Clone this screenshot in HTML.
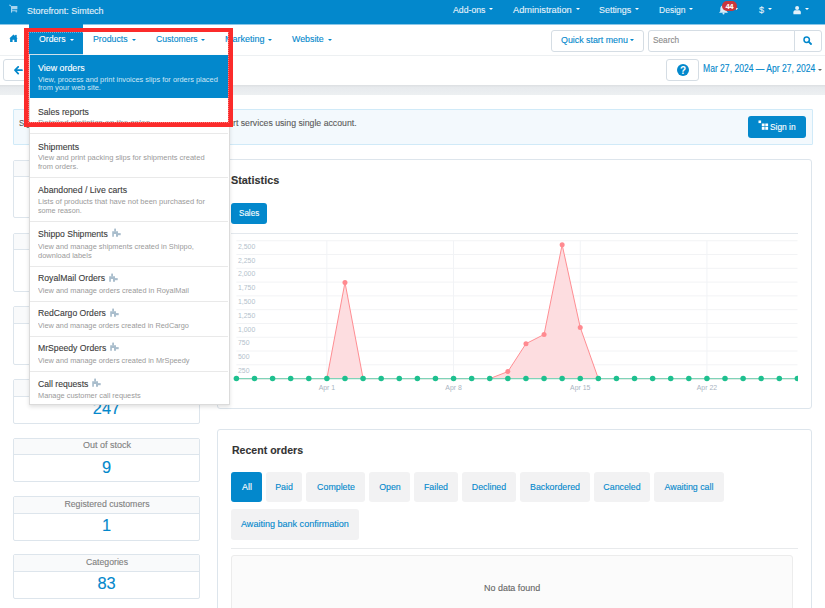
<!DOCTYPE html>
<html><head><meta charset="utf-8"><style>
html,body{margin:0;padding:0;}
body{width:825px;height:608px;overflow:hidden;position:relative;background:#fff;font-family:"Liberation Sans", sans-serif;}
body>div{position:absolute;box-sizing:content-box;}
.t{white-space:nowrap;-webkit-text-stroke:0.12px currentColor;}
.d{-webkit-text-stroke:0;}
</style></head><body>
<div style="left:0px;top:0px;width:825px;height:24px;background:#0388cc;"></div>
<div style="left:0px;top:24px;width:825px;height:1px;background:#8ac7e8;"></div>
<svg style="position:absolute;left:8px;top:4px" width="10" height="10" viewBox="0 0 10 10"><path d="M0.9 0.7H2.4L3.2 2.1H9.4V5.2H4.1V6.2H9.2V7.3H3V2.5L1.5 1.8Z" fill="#a6d4ee"/><rect x="3" y="2.1" width="1.1" height="6.5" fill="#a6d4ee"/><circle cx="8.3" cy="7.6" r="0.9" fill="#8cc6e8"/></svg>
<div class="t" style="left:27.4px;top:5.87px;font-size:9.6px;line-height:9.6px;color:#e3f1fa;font-weight:400;transform:scaleX(0.9322);transform-origin:0 50%;">Storefront: Simtech</div>
<div class="t" style="left:453px;top:5.17px;font-size:9.6px;line-height:9.6px;color:#e3f1fa;font-weight:400;transform:scaleX(0.9089);transform-origin:0 50%;">Add-ons</div>
<svg style="position:absolute;left:489px;top:7.5px" width="4" height="2" viewBox="0 0 4 2"><polygon points="0,0 4,0 2.0,2" fill="#fff"/></svg>
<div class="t" style="left:513px;top:5.17px;font-size:9.6px;line-height:9.6px;color:#e3f1fa;font-weight:400;transform:scaleX(0.9659);transform-origin:0 50%;">Administration</div>
<svg style="position:absolute;left:575.5px;top:7.5px" width="4" height="2" viewBox="0 0 4 2"><polygon points="0,0 4,0 2.0,2" fill="#fff"/></svg>
<div class="t" style="left:599px;top:5.17px;font-size:9.6px;line-height:9.6px;color:#e3f1fa;font-weight:400;transform:scaleX(0.9297);transform-origin:0 50%;">Settings</div>
<svg style="position:absolute;left:635px;top:7.5px" width="4" height="2" viewBox="0 0 4 2"><polygon points="0,0 4,0 2.0,2" fill="#fff"/></svg>
<div class="t" style="left:658.75px;top:5.17px;font-size:9.6px;line-height:9.6px;color:#e3f1fa;font-weight:400;transform:scaleX(0.8868);transform-origin:0 50%;">Design</div>
<svg style="position:absolute;left:689px;top:7.5px" width="4" height="2" viewBox="0 0 4 2"><polygon points="0,0 4,0 2.0,2" fill="#fff"/></svg>
<svg style="position:absolute;left:718px;top:4px" width="11" height="11" viewBox="0 0 11 11"><path d="M5.5 1.2c-2 0-3.2 1.6-3.2 3.6v2.4L1 8.8h9L8.7 7.2V4.8c0-2-1.2-3.6-3.2-3.6z" fill="#d7ecf8"/><circle cx="5.5" cy="9.6" r="1" fill="#d7ecf8"/></svg>
<svg style="position:absolute;left:735px;top:7.5px" width="3" height="2" viewBox="0 0 3 2"><polygon points="0,0 3,0 1.5,2" fill="#fff"/></svg>
<div style="left:722px;top:1px;width:15px;height:9.5px;border-radius:5px;background:#c9373b;"></div>
<div class="t" style="left:429.6px;width:600px;text-align:center;top:3.37px;font-size:7px;line-height:7px;color:#fff;font-weight:700;">44</div>
<div class="t" style="left:759px;top:5.78px;font-size:9px;line-height:9px;color:#e3f1fa;font-weight:400;">$</div>
<svg style="position:absolute;left:767.5px;top:7.8px" width="4" height="2" viewBox="0 0 4 2"><polygon points="0,0 4,0 2.0,2" fill="#fff"/></svg>
<svg style="position:absolute;left:793px;top:4.6px" width="9" height="10" viewBox="0 0 9 10"><circle cx="4.1" cy="3" r="2" fill="#e3f1fa"/><path d="M0.4 9.2V7.2C0.4 5.8 1.4 5.2 2.6 5.2H5.6C6.8 5.2 7.8 5.8 7.8 7.2V9.2Z" fill="#e3f1fa"/></svg>
<svg style="position:absolute;left:805px;top:7.8px" width="4" height="2" viewBox="0 0 4 2"><polygon points="0,0 4,0 2.0,2" fill="#fff"/></svg>
<div style="left:0px;top:55px;width:825px;height:1px;background:#edf0f2;"></div>
<svg style="position:absolute;left:9px;top:34px" width="10" height="9" viewBox="0 0 10 9"><path d="M0.3 4.6L4.5 0.4L8.7 4.6H7.9V7.9H5.3V5.7H3.6V7.9H1.1V4.6Z" fill="#0388cc"/><rect x="6.1" y="0.9" width="1.6" height="2.8" fill="#0388cc"/></svg>
<div style="left:29px;top:24px;width:54px;height:30px;background:#0388cc;"></div>
<div style="left:29px;top:54px;width:54px;height:1px;background:#d2e4ee;"></div>
<div class="t" style="left:38.7px;top:33.84px;font-size:9.4px;line-height:9.4px;color:#fff;font-weight:400;transform:scaleX(0.9294);transform-origin:0 50%;">Orders</div>
<svg style="position:absolute;left:70px;top:38.5px" width="4" height="2" viewBox="0 0 4 2"><polygon points="0,0 4,0 2.0,2" fill="#fff"/></svg>
<div class="t" style="left:93.1px;top:33.84px;font-size:9.4px;line-height:9.4px;color:#0388cc;font-weight:400;transform:scaleX(0.9354);transform-origin:0 50%;">Products</div>
<svg style="position:absolute;left:132px;top:38.5px" width="4" height="2" viewBox="0 0 4 2"><polygon points="0,0 4,0 2.0,2" fill="#0388cc"/></svg>
<div class="t" style="left:155.5px;top:33.84px;font-size:9.4px;line-height:9.4px;color:#0388cc;font-weight:400;transform:scaleX(0.9176);transform-origin:0 50%;">Customers</div>
<svg style="position:absolute;left:201.3px;top:38.5px" width="4" height="2" viewBox="0 0 4 2"><polygon points="0,0 4,0 2.0,2" fill="#0388cc"/></svg>
<div class="t" style="left:225px;top:33.84px;font-size:9.4px;line-height:9.4px;color:#0388cc;font-weight:400;transform:scaleX(0.9631);transform-origin:0 50%;">Marketing</div>
<svg style="position:absolute;left:268px;top:38.5px" width="4" height="2" viewBox="0 0 4 2"><polygon points="0,0 4,0 2.0,2" fill="#0388cc"/></svg>
<div class="t" style="left:292.2px;top:33.84px;font-size:9.4px;line-height:9.4px;color:#0388cc;font-weight:400;transform:scaleX(0.9412);transform-origin:0 50%;">Website</div>
<svg style="position:absolute;left:328px;top:38.5px" width="4" height="2" viewBox="0 0 4 2"><polygon points="0,0 4,0 2.0,2" fill="#0388cc"/></svg>
<div style="left:551px;top:30px;width:91px;height:20px;border:1px solid #d5dde4;border-radius:3px;background:#fff;"></div>
<div class="t" style="left:561.25px;top:35.04px;font-size:9.4px;line-height:9.4px;color:#0388cc;font-weight:400;transform:scaleX(0.9430);transform-origin:0 50%;">Quick start menu</div>
<svg style="position:absolute;left:630px;top:39.2px" width="4" height="2.2" viewBox="0 0 4 2.2"><polygon points="0,0 4,0 2.0,2.2" fill="#0388cc"/></svg>
<div style="left:648px;top:30px;width:145px;height:20px;border:1px solid #d5dde4;border-radius:3px 0 0 3px;background:#fff;"></div>
<div class="t" style="left:652.75px;top:34.64px;font-size:9.4px;line-height:9.4px;color:#8c8c8c;font-weight:400;transform:scaleX(0.8813);transform-origin:0 50%;">Search</div>
<div style="left:794px;top:30px;width:26px;height:20px;border:1px solid #d5dde4;border-radius:0 3px 3px 0;background:#fff;"></div>
<svg style="position:absolute;left:803px;top:36px" width="9" height="9" viewBox="0 0 9 9"><circle cx="3.7" cy="3.7" r="2.7" fill="none" stroke="#0388cc" stroke-width="1.5"/><path d="M5.6 5.6L8 8" stroke="#0388cc" stroke-width="1.8" stroke-linecap="round"/></svg>
<div style="left:3px;top:59px;width:34px;height:20px;border:1px solid #d5dde4;border-radius:3px;background:#fff;"></div>
<svg style="position:absolute;left:14px;top:65.5px" width="9" height="9" viewBox="0 0 9 9"><path d="M4.2 0.8L1 4.2l3.2 3.4M1.4 4.2H8" fill="none" stroke="#0388cc" stroke-width="1.7" stroke-linecap="round" stroke-linejoin="round"/></svg>
<div style="left:666px;top:59px;width:31px;height:20px;border:1px solid #d5dde4;border-radius:3px;background:#fff;"></div>
<svg style="position:absolute;left:677px;top:63.6px" width="12" height="12" viewBox="0 0 12 12"><circle cx="6" cy="6" r="6" fill="#0388cc"/><text x="6" y="9.6" text-anchor="middle" font-family="Liberation Sans" font-weight="700" font-size="10" fill="#fff">?</text></svg>
<div class="t" style="left:703px;top:63.73px;font-size:10px;line-height:10px;color:#0388cc;font-weight:400;transform:scaleX(0.8556);transform-origin:0 50%;">Mar 27, 2024 — Apr 27, 2024</div>
<svg style="position:absolute;left:818px;top:69px" width="4" height="2" viewBox="0 0 4 2"><polygon points="0,0 4,0 2.0,2" fill="#666"/></svg>
<div style="left:0px;top:85px;width:825px;height:10px;background:linear-gradient(#dcdfe2,#e7eaed 25%,#eaedf0 60%,#edf0f2);"></div>
<div style="left:13px;top:109px;width:798px;height:33.5px;border:1px solid #d0eaf8;background:#f3f9fd;border-radius:1px;"></div>
<div class="t" style="left:19.4px;top:117.70px;font-size:9.8px;line-height:9.8px;color:#5c5c5c;font-weight:400;transform:scaleX(0.8091);transform-origin:0 50%;">Sign in to your account to connect the marketplace and Sma</div>
<div class="t" style="left:232.6px;top:117.87px;font-size:9.6px;line-height:9.6px;color:#5c5c5c;font-weight:400;transform:scaleX(0.9091);transform-origin:0 50%;">rt services using single account.</div>
<div style="left:748px;top:116px;width:58px;height:21.5px;border-radius:3px;background:#0388cc;"></div>
<svg style="position:absolute;left:757.5px;top:120px" width="11" height="11" viewBox="0 0 11 11"><rect x="0.5" y="0.5" width="2.6" height="2.6" fill="#fff"/><rect x="3.8" y="3.5" width="2.8" height="2.8" fill="#fff"/><rect x="7.3" y="3.5" width="2.8" height="2.8" fill="#fff"/><rect x="3.8" y="7" width="2.8" height="2.8" fill="#fff"/><rect x="7.3" y="7" width="2.8" height="2.8" fill="#fff"/></svg>
<div class="t" style="left:770px;top:122.07px;font-size:9.6px;line-height:9.6px;color:#fff;font-weight:400;transform:scaleX(0.8721);transform-origin:0 50%;">Sign in</div>
<div style="left:13.3px;top:159.5px;width:184.5px;height:56.7px;border:1px solid #dde5ec;background:#fff;border-radius:2px;"></div>
<div style="left:14.3px;top:160.5px;width:184.5px;height:15.5px;background:#f9fafb;border-bottom:1px solid #dde5ec;"></div>
<div class="t" style="left:-193.5px;width:600px;text-align:center;top:163.23px;font-size:9.3px;line-height:9.3px;color:#808080;font-weight:400;transform:scaleX(0.9500);transform-origin:50% 50%;">Orders</div>
<div class="t" style="left:-193.5px;width:600px;text-align:center;top:188.12px;font-size:16.4px;line-height:16.4px;color:#0388cc;font-weight:400;">3</div>
<div style="left:13.3px;top:232.5px;width:184.5px;height:57.2px;border:1px solid #dde5ec;background:#fff;border-radius:2px;"></div>
<div style="left:14.3px;top:233.5px;width:184.5px;height:15.8px;background:#f9fafb;border-bottom:1px solid #dde5ec;"></div>
<div class="t" style="left:-193.5px;width:600px;text-align:center;top:236.53px;font-size:9.3px;line-height:9.3px;color:#808080;font-weight:400;transform:scaleX(0.9500);transform-origin:50% 50%;">Sales</div>
<div class="t" style="left:-193.5px;width:600px;text-align:center;top:261.42px;font-size:16.4px;line-height:16.4px;color:#0388cc;font-weight:400;">$0.00</div>
<div style="left:13.3px;top:305.5px;width:184.5px;height:57.2px;border:1px solid #dde5ec;background:#fff;border-radius:2px;"></div>
<div style="left:14.3px;top:306.5px;width:184.5px;height:16.0px;background:#f9fafb;border-bottom:1px solid #dde5ec;"></div>
<div class="t" style="left:-193.5px;width:600px;text-align:center;top:309.73px;font-size:9.3px;line-height:9.3px;color:#808080;font-weight:400;transform:scaleX(0.9500);transform-origin:50% 50%;">Taxes</div>
<div class="t" style="left:-193.5px;width:600px;text-align:center;top:334.62px;font-size:16.4px;line-height:16.4px;color:#0388cc;font-weight:400;">$0.00</div>
<div style="left:13.3px;top:378.5px;width:184.5px;height:43.9px;border:1px solid #dde5ec;background:#fff;border-radius:2px;"></div>
<div style="left:14.3px;top:379.5px;width:184.5px;height:16.0px;background:#f9fafb;border-bottom:1px solid #dde5ec;"></div>
<div class="t" style="left:-193.5px;width:600px;text-align:center;top:382.73px;font-size:9.3px;line-height:9.3px;color:#808080;font-weight:400;transform:scaleX(0.9500);transform-origin:50% 50%;">Active products</div>
<div class="t" style="left:-193.5px;width:600px;text-align:center;top:399.92px;font-size:16.4px;line-height:16.4px;color:#0388cc;font-weight:400;">247</div>
<div style="left:13.3px;top:437.5px;width:184.5px;height:42.6px;border:1px solid #dde5ec;background:#fff;border-radius:2px;"></div>
<div style="left:14.3px;top:438.5px;width:184.5px;height:15.7px;background:#f9fafb;border-bottom:1px solid #dde5ec;"></div>
<div class="t" style="left:-193.5px;width:600px;text-align:center;top:441.43px;font-size:9.3px;line-height:9.3px;color:#808080;font-weight:400;transform:scaleX(0.9674);transform-origin:50% 50%;">Out of stock</div>
<div class="t" style="left:-193.5px;width:600px;text-align:center;top:458.62px;font-size:16.4px;line-height:16.4px;color:#0388cc;font-weight:400;">9</div>
<div style="left:13.3px;top:496px;width:184.5px;height:43.2px;border:1px solid #dde5ec;background:#fff;border-radius:2px;"></div>
<div style="left:14.3px;top:497px;width:184.5px;height:16.0px;background:#f9fafb;border-bottom:1px solid #dde5ec;"></div>
<div class="t" style="left:-193.5px;width:600px;text-align:center;top:500.23px;font-size:9.3px;line-height:9.3px;color:#808080;font-weight:400;transform:scaleX(0.9419);transform-origin:50% 50%;">Registered customers</div>
<div class="t" style="left:-193.5px;width:600px;text-align:center;top:517.42px;font-size:16.4px;line-height:16.4px;color:#0388cc;font-weight:400;">1</div>
<div style="left:13.3px;top:554.4px;width:184.5px;height:42.3px;border:1px solid #dde5ec;background:#fff;border-radius:2px;"></div>
<div style="left:14.3px;top:555.4px;width:184.5px;height:15.6px;background:#f9fafb;border-bottom:1px solid #dde5ec;"></div>
<div class="t" style="left:-193.5px;width:600px;text-align:center;top:558.23px;font-size:9.3px;line-height:9.3px;color:#808080;font-weight:400;transform:scaleX(0.9338);transform-origin:50% 50%;">Categories</div>
<div class="t" style="left:-193.5px;width:600px;text-align:center;top:575.42px;font-size:16.4px;line-height:16.4px;color:#0388cc;font-weight:400;">83</div>
<div style="left:217px;top:159.3px;width:593px;height:247.5px;border:1px solid #dde5ec;border-radius:3px;background:#fff;"></div>
<div class="t" style="left:231.3px;top:175.19px;font-size:11px;line-height:11px;color:#333;font-weight:700;transform:scaleX(0.9855);transform-origin:0 50%;">Statistics</div>
<div style="left:231px;top:203px;width:36px;height:21px;border-radius:3px;background:#0388cc;"></div>
<div class="t" style="left:239.3px;top:207.67px;font-size:9.6px;line-height:9.6px;color:#fff;font-weight:400;transform:scaleX(0.8411);transform-origin:0 50%;">Sales</div>
<div style="left:231.25px;top:233px;width:566.25px;height:1px;background:#e3e8ed;"></div>
<svg style="position:absolute;left:0;top:0" width="825" height="608" viewBox="0 0 825 608"><line x1="236.4" y1="364.81" x2="797.5" y2="364.81" stroke="#f2f3f5" stroke-width="1"/><line x1="236.4" y1="351.03" x2="797.5" y2="351.03" stroke="#f2f3f5" stroke-width="1"/><line x1="236.4" y1="337.25" x2="797.5" y2="337.25" stroke="#f2f3f5" stroke-width="1"/><line x1="236.4" y1="323.46" x2="797.5" y2="323.46" stroke="#f2f3f5" stroke-width="1"/><line x1="236.4" y1="309.68" x2="797.5" y2="309.68" stroke="#f2f3f5" stroke-width="1"/><line x1="236.4" y1="295.89" x2="797.5" y2="295.89" stroke="#f2f3f5" stroke-width="1"/><line x1="236.4" y1="282.11" x2="797.5" y2="282.11" stroke="#f2f3f5" stroke-width="1"/><line x1="236.4" y1="268.32" x2="797.5" y2="268.32" stroke="#f2f3f5" stroke-width="1"/><line x1="236.4" y1="254.54" x2="797.5" y2="254.54" stroke="#f2f3f5" stroke-width="1"/><line x1="236.4" y1="240.75" x2="797.5" y2="240.75" stroke="#f2f3f5" stroke-width="1"/><line x1="326.88" y1="240.75" x2="326.88" y2="378.6" stroke="#f1f3f6" stroke-width="1"/><line x1="453.56" y1="240.75" x2="453.56" y2="378.6" stroke="#f1f3f6" stroke-width="1"/><line x1="580.24" y1="240.75" x2="580.24" y2="378.6" stroke="#f1f3f6" stroke-width="1"/><line x1="706.92" y1="240.75" x2="706.92" y2="378.6" stroke="#f1f3f6" stroke-width="1"/><polygon points="236.40,378.6 236.40,378.60 254.50,378.60 272.59,378.60 290.69,378.60 308.79,378.60 326.88,378.60 344.98,282.38 363.08,378.60 381.17,378.60 399.27,378.60 417.37,378.60 435.46,378.60 453.56,378.60 471.66,378.60 489.75,378.60 507.85,371.60 525.95,343.70 544.05,334.49 562.14,244.78 580.24,327.43 598.34,378.60 616.43,378.60 634.53,378.60 652.63,378.60 670.72,378.60 688.82,378.60 706.92,378.60 725.01,378.60 743.11,378.60 761.21,378.60 779.30,378.60 797.40,378.60 797.40,378.6" fill="#fddde0"/><polyline points="236.40,378.60 254.50,378.60 272.59,378.60 290.69,378.60 308.79,378.60 326.88,378.60 344.98,282.38 363.08,378.60 381.17,378.60 399.27,378.60 417.37,378.60 435.46,378.60 453.56,378.60 471.66,378.60 489.75,378.60 507.85,371.60 525.95,343.70 544.05,334.49 562.14,244.78 580.24,327.43 598.34,378.60 616.43,378.60 634.53,378.60 652.63,378.60 670.72,378.60 688.82,378.60 706.92,378.60 725.01,378.60 743.11,378.60 761.21,378.60 779.30,378.60 797.40,378.60" fill="none" stroke="#ff8e93" stroke-width="1"/><line x1="236.4" y1="378.6" x2="797.5" y2="378.6" stroke="#7fd3b8" stroke-width="1.2"/><circle cx="344.98" cy="282.38" r="2.5" fill="#ff8a90"/><circle cx="507.85" cy="371.60" r="2.5" fill="#ff8a90"/><circle cx="525.95" cy="343.70" r="2.5" fill="#ff8a90"/><circle cx="544.05" cy="334.49" r="2.5" fill="#ff8a90"/><circle cx="562.14" cy="244.78" r="2.5" fill="#ff8a90"/><circle cx="580.24" cy="327.43" r="2.5" fill="#ff8a90"/><circle cx="236.40" cy="378.6" r="2.75" fill="#1ec08f"/><circle cx="254.50" cy="378.6" r="2.75" fill="#1ec08f"/><circle cx="272.59" cy="378.6" r="2.75" fill="#1ec08f"/><circle cx="290.69" cy="378.6" r="2.75" fill="#1ec08f"/><circle cx="308.79" cy="378.6" r="2.75" fill="#1ec08f"/><circle cx="326.88" cy="378.6" r="2.75" fill="#1ec08f"/><circle cx="344.98" cy="378.6" r="2.75" fill="#1ec08f"/><circle cx="363.08" cy="378.6" r="2.75" fill="#1ec08f"/><circle cx="381.17" cy="378.6" r="2.75" fill="#1ec08f"/><circle cx="399.27" cy="378.6" r="2.75" fill="#1ec08f"/><circle cx="417.37" cy="378.6" r="2.75" fill="#1ec08f"/><circle cx="435.46" cy="378.6" r="2.75" fill="#1ec08f"/><circle cx="453.56" cy="378.6" r="2.75" fill="#1ec08f"/><circle cx="471.66" cy="378.6" r="2.75" fill="#1ec08f"/><circle cx="489.75" cy="378.6" r="2.75" fill="#1ec08f"/><circle cx="507.85" cy="378.6" r="2.75" fill="#1ec08f"/><circle cx="525.95" cy="378.6" r="2.75" fill="#1ec08f"/><circle cx="544.05" cy="378.6" r="2.75" fill="#1ec08f"/><circle cx="562.14" cy="378.6" r="2.75" fill="#1ec08f"/><circle cx="580.24" cy="378.6" r="2.75" fill="#1ec08f"/><circle cx="598.34" cy="378.6" r="2.75" fill="#1ec08f"/><circle cx="616.43" cy="378.6" r="2.75" fill="#1ec08f"/><circle cx="634.53" cy="378.6" r="2.75" fill="#1ec08f"/><circle cx="652.63" cy="378.6" r="2.75" fill="#1ec08f"/><circle cx="670.72" cy="378.6" r="2.75" fill="#1ec08f"/><circle cx="688.82" cy="378.6" r="2.75" fill="#1ec08f"/><circle cx="706.92" cy="378.6" r="2.75" fill="#1ec08f"/><circle cx="725.01" cy="378.6" r="2.75" fill="#1ec08f"/><circle cx="743.11" cy="378.6" r="2.75" fill="#1ec08f"/><circle cx="761.21" cy="378.6" r="2.75" fill="#1ec08f"/><circle cx="779.30" cy="378.6" r="2.75" fill="#1ec08f"/><circle cx="797.40" cy="378.6" r="2.75" fill="#1ec08f"/></svg>
<div style="left:797.6px;top:370px;width:7.399999999999977px;height:15px;background:#fff;"></div>
<div class="t" style="left:238px;top:243.91px;font-size:6.9px;line-height:6.9px;color:#b4bfcc;font-weight:400;-webkit-text-stroke:0;">2,500</div>
<div class="t" style="left:238px;top:257.69px;font-size:6.9px;line-height:6.9px;color:#b4bfcc;font-weight:400;-webkit-text-stroke:0;">2,250</div>
<div class="t" style="left:238px;top:271.48px;font-size:6.9px;line-height:6.9px;color:#b4bfcc;font-weight:400;-webkit-text-stroke:0;">2,000</div>
<div class="t" style="left:238px;top:285.26px;font-size:6.9px;line-height:6.9px;color:#b4bfcc;font-weight:400;-webkit-text-stroke:0;">1,750</div>
<div class="t" style="left:238px;top:299.05px;font-size:6.9px;line-height:6.9px;color:#b4bfcc;font-weight:400;-webkit-text-stroke:0;">1,500</div>
<div class="t" style="left:238px;top:312.83px;font-size:6.9px;line-height:6.9px;color:#b4bfcc;font-weight:400;-webkit-text-stroke:0;">1,250</div>
<div class="t" style="left:238px;top:326.62px;font-size:6.9px;line-height:6.9px;color:#b4bfcc;font-weight:400;-webkit-text-stroke:0;">1,000</div>
<div class="t" style="left:238px;top:340.40px;font-size:6.9px;line-height:6.9px;color:#b4bfcc;font-weight:400;-webkit-text-stroke:0;">750</div>
<div class="t" style="left:238px;top:354.19px;font-size:6.9px;line-height:6.9px;color:#b4bfcc;font-weight:400;-webkit-text-stroke:0;">500</div>
<div class="t" style="left:238px;top:367.97px;font-size:6.9px;line-height:6.9px;color:#b4bfcc;font-weight:400;-webkit-text-stroke:0;">250</div>
<div class="t" style="left:26.883870967741927px;width:600px;text-align:center;top:384.66px;font-size:6.9px;line-height:6.9px;color:#a9b4c2;font-weight:400;-webkit-text-stroke:0;">Apr 1</div>
<div class="t" style="left:153.5612903225807px;width:600px;text-align:center;top:384.66px;font-size:6.9px;line-height:6.9px;color:#a9b4c2;font-weight:400;-webkit-text-stroke:0;">Apr 8</div>
<div class="t" style="left:280.23870967741937px;width:600px;text-align:center;top:384.66px;font-size:6.9px;line-height:6.9px;color:#a9b4c2;font-weight:400;-webkit-text-stroke:0;">Apr 15</div>
<div class="t" style="left:406.91612903225814px;width:600px;text-align:center;top:384.66px;font-size:6.9px;line-height:6.9px;color:#a9b4c2;font-weight:400;-webkit-text-stroke:0;">Apr 22</div>
<div style="left:217px;top:429px;width:593px;height:200px;border:1px solid #dde5ec;border-radius:3px;background:#fff;"></div>
<div class="t" style="left:231.9px;top:445.49px;font-size:11px;line-height:11px;color:#333;font-weight:700;transform:scaleX(0.9598);transform-origin:0 50%;">Recent orders</div>
<div style="left:231.25px;top:472px;width:30.50px;height:29.75px;border-radius:3px;background:#0388cc;"></div>
<div class="t" style="left:-53.5px;width:600px;text-align:center;top:483.01px;font-size:9.2px;line-height:9.2px;color:#fff;font-weight:400;transform:scaleX(0.9600);transform-origin:50% 50%;">All</div>
<div style="left:266.25px;top:472px;width:35.75px;height:29.75px;border-radius:3px;background:#f2f2f3;"></div>
<div class="t" style="left:-15.875px;width:600px;text-align:center;top:483.01px;font-size:9.2px;line-height:9.2px;color:#0388cc;font-weight:400;transform:scaleX(0.9600);transform-origin:50% 50%;">Paid</div>
<div style="left:306.25px;top:472px;width:58.75px;height:29.75px;border-radius:3px;background:#f2f2f3;"></div>
<div class="t" style="left:35.625px;width:600px;text-align:center;top:483.01px;font-size:9.2px;line-height:9.2px;color:#0388cc;font-weight:400;transform:scaleX(0.9600);transform-origin:50% 50%;">Complete</div>
<div style="left:369.25px;top:472px;width:40.75px;height:29.75px;border-radius:3px;background:#f2f2f3;"></div>
<div class="t" style="left:89.625px;width:600px;text-align:center;top:483.01px;font-size:9.2px;line-height:9.2px;color:#0388cc;font-weight:400;transform:scaleX(0.9600);transform-origin:50% 50%;">Open</div>
<div style="left:414.25px;top:472px;width:43.25px;height:29.75px;border-radius:3px;background:#f2f2f3;"></div>
<div class="t" style="left:135.875px;width:600px;text-align:center;top:483.01px;font-size:9.2px;line-height:9.2px;color:#0388cc;font-weight:400;transform:scaleX(0.9600);transform-origin:50% 50%;">Failed</div>
<div style="left:462px;top:472px;width:53.75px;height:29.75px;border-radius:3px;background:#f2f2f3;"></div>
<div class="t" style="left:188.875px;width:600px;text-align:center;top:483.01px;font-size:9.2px;line-height:9.2px;color:#0388cc;font-weight:400;transform:scaleX(0.9600);transform-origin:50% 50%;">Declined</div>
<div style="left:520px;top:472px;width:70.00px;height:29.75px;border-radius:3px;background:#f2f2f3;"></div>
<div class="t" style="left:255.0px;width:600px;text-align:center;top:483.01px;font-size:9.2px;line-height:9.2px;color:#0388cc;font-weight:400;transform:scaleX(0.9600);transform-origin:50% 50%;">Backordered</div>
<div style="left:594.25px;top:472px;width:55.75px;height:29.75px;border-radius:3px;background:#f2f2f3;"></div>
<div class="t" style="left:322.125px;width:600px;text-align:center;top:483.01px;font-size:9.2px;line-height:9.2px;color:#0388cc;font-weight:400;transform:scaleX(0.9600);transform-origin:50% 50%;">Canceled</div>
<div style="left:654px;top:472px;width:70.00px;height:29.75px;border-radius:3px;background:#f2f2f3;"></div>
<div class="t" style="left:389.0px;width:600px;text-align:center;top:483.01px;font-size:9.2px;line-height:9.2px;color:#0388cc;font-weight:400;transform:scaleX(0.9600);transform-origin:50% 50%;">Awaiting call</div>
<div style="left:231px;top:509px;width:127.75px;height:30.75px;border-radius:3px;background:#f2f2f3;"></div>
<div class="t" style="left:241.25px;top:519.91px;font-size:9.2px;line-height:9.2px;color:#0388cc;font-weight:400;transform:scaleX(0.9838);transform-origin:0 50%;">Awaiting bank confirmation</div>
<div style="left:231px;top:548px;width:566.75px;height:1px;background:#e8eaec;"></div>
<div style="left:231px;top:555px;width:560px;height:80px;border:1px solid #ececec;border-radius:3px;background:#fbfbfb;"></div>
<div class="t" style="left:483.75px;top:584.13px;font-size:9.3px;line-height:9.3px;color:#666;font-weight:400;transform:scaleX(0.9627);transform-origin:0 50%;">No data found</div>
<div style="left:29.3px;top:55px;width:198.5px;height:349px;border:1px solid rgba(0,0,0,0.14);border-top:none;background:#fff;box-shadow:0 2px 4px rgba(0,0,0,0.12);"></div>
<div style="left:30.3px;top:55px;width:197.5px;height:42.5px;background:#0388cc;"></div>
<div class="t" style="left:38.25px;top:62.64px;font-size:9.4px;line-height:9.4px;color:#fff;font-weight:400;transform:scaleX(0.9452);transform-origin:0 50%;">View orders</div>
<div class="t" style="left:38.25px;top:76.01px;font-size:7.9px;line-height:7.9px;color:#cfe7f5;font-weight:400;transform:scaleX(0.9387);transform-origin:0 50%;-webkit-text-stroke:0;">View, process and print invoices slips for orders placed</div>
<div class="t" style="left:38.25px;top:84.31px;font-size:7.9px;line-height:7.9px;color:#cfe7f5;font-weight:400;transform:scaleX(0.9440);transform-origin:0 50%;-webkit-text-stroke:0;">from your web site.</div>
<div class="t" style="left:38.25px;top:107.14px;font-size:9.4px;line-height:9.4px;color:#3d3d3d;font-weight:400;transform:scaleX(0.9209);transform-origin:0 50%;">Sales reports</div>
<div class="t" style="left:38.25px;top:118.71px;font-size:7.9px;line-height:7.9px;color:#9a9a9a;font-weight:400;transform:scaleX(1.0540);transform-origin:0 50%;-webkit-text-stroke:0;">Detailed statistics on the sales</div>
<div style="left:30.3px;top:133px;width:197.5px;height:1px;background:#e9e9e9;"></div>
<div class="t" style="left:38.25px;top:142.14px;font-size:9.4px;line-height:9.4px;color:#3d3d3d;font-weight:400;transform:scaleX(0.9288);transform-origin:0 50%;">Shipments</div>
<div class="t" style="left:38.25px;top:154.21px;font-size:7.9px;line-height:7.9px;color:#9a9a9a;font-weight:400;transform:scaleX(0.9501);transform-origin:0 50%;-webkit-text-stroke:0;">View and print packing slips for shipments created</div>
<div class="t" style="left:38.25px;top:162.91px;font-size:7.9px;line-height:7.9px;color:#9a9a9a;font-weight:400;transform:scaleX(0.9511);transform-origin:0 50%;-webkit-text-stroke:0;">from orders.</div>
<div style="left:30.3px;top:177px;width:197.5px;height:1px;background:#e9e9e9;"></div>
<div class="t" style="left:38.25px;top:185.14px;font-size:9.4px;line-height:9.4px;color:#3d3d3d;font-weight:400;transform:scaleX(0.9282);transform-origin:0 50%;">Abandoned / Live carts</div>
<div class="t" style="left:38.25px;top:198.01px;font-size:7.9px;line-height:7.9px;color:#9a9a9a;font-weight:400;transform:scaleX(0.9521);transform-origin:0 50%;-webkit-text-stroke:0;">Lists of products that have not been purchased for</div>
<div class="t" style="left:38.25px;top:207.11px;font-size:7.9px;line-height:7.9px;color:#9a9a9a;font-weight:400;transform:scaleX(0.9140);transform-origin:0 50%;-webkit-text-stroke:0;">some reason.</div>
<div style="left:30.3px;top:221px;width:197.5px;height:1px;background:#e9e9e9;"></div>
<div class="t" style="left:38.25px;top:229.14px;font-size:9.4px;line-height:9.4px;color:#3d3d3d;font-weight:400;transform:scaleX(0.9175);transform-origin:0 50%;">Shippo Shipments</div>
<div class="t" style="left:38.25px;top:242.91px;font-size:7.9px;line-height:7.9px;color:#9a9a9a;font-weight:400;transform:scaleX(0.9331);transform-origin:0 50%;-webkit-text-stroke:0;">View and manage shipments created in Shippo,</div>
<div class="t" style="left:38.25px;top:251.61px;font-size:7.9px;line-height:7.9px;color:#9a9a9a;font-weight:400;transform:scaleX(0.9486);transform-origin:0 50%;-webkit-text-stroke:0;">download labels</div>
<div style="left:30.3px;top:265.5px;width:197.5px;height:1.0px;background:#e9e9e9;"></div>
<svg style="position:absolute;left:112px;top:228px" width="9" height="9" viewBox="0 0 9 9"><path d="M0.2 3.3H6V8.8H4V5.9H1.9V8.8H0.2Z" fill="#a9bdcc"/><rect x="2.2" y="0.6" width="1.8" height="2.8" fill="#a9bdcc"/><rect x="6" y="5.1" width="2.7" height="2.1" fill="#a9bdcc"/></svg>
<div class="t" style="left:38.25px;top:273.34px;font-size:9.4px;line-height:9.4px;color:#3d3d3d;font-weight:400;transform:scaleX(0.9262);transform-origin:0 50%;">RoyalMail Orders</div>
<div class="t" style="left:38.25px;top:286.61px;font-size:7.9px;line-height:7.9px;color:#9a9a9a;font-weight:400;transform:scaleX(0.9352);transform-origin:0 50%;-webkit-text-stroke:0;">View and manage orders created in RoyalMail</div>
<div style="left:30.3px;top:300.5px;width:197.5px;height:1.0px;background:#e9e9e9;"></div>
<svg style="position:absolute;left:109px;top:273px" width="9" height="9" viewBox="0 0 9 9"><path d="M0.2 3.3H6V8.8H4V5.9H1.9V8.8H0.2Z" fill="#a9bdcc"/><rect x="2.2" y="0.6" width="1.8" height="2.8" fill="#a9bdcc"/><rect x="6" y="5.1" width="2.7" height="2.1" fill="#a9bdcc"/></svg>
<div class="t" style="left:38.25px;top:308.34px;font-size:9.4px;line-height:9.4px;color:#3d3d3d;font-weight:400;transform:scaleX(0.9166);transform-origin:0 50%;">RedCargo Orders</div>
<div class="t" style="left:38.25px;top:321.61px;font-size:7.9px;line-height:7.9px;color:#9a9a9a;font-weight:400;transform:scaleX(0.9276);transform-origin:0 50%;-webkit-text-stroke:0;">View and manage orders created in RedCargo</div>
<div style="left:30.3px;top:335.5px;width:197.5px;height:1.0px;background:#e9e9e9;"></div>
<svg style="position:absolute;left:110px;top:308px" width="9" height="9" viewBox="0 0 9 9"><path d="M0.2 3.3H6V8.8H4V5.9H1.9V8.8H0.2Z" fill="#a9bdcc"/><rect x="2.2" y="0.6" width="1.8" height="2.8" fill="#a9bdcc"/><rect x="6" y="5.1" width="2.7" height="2.1" fill="#a9bdcc"/></svg>
<div class="t" style="left:38.25px;top:343.04px;font-size:9.4px;line-height:9.4px;color:#3d3d3d;font-weight:400;transform:scaleX(0.9220);transform-origin:0 50%;">MrSpeedy Orders</div>
<div class="t" style="left:38.25px;top:356.71px;font-size:7.9px;line-height:7.9px;color:#9a9a9a;font-weight:400;transform:scaleX(0.9313);transform-origin:0 50%;-webkit-text-stroke:0;">View and manage orders created in MrSpeedy</div>
<div style="left:30.3px;top:370.6px;width:197.5px;height:1.0px;background:#e9e9e9;"></div>
<svg style="position:absolute;left:110px;top:342px" width="9" height="9" viewBox="0 0 9 9"><path d="M0.2 3.3H6V8.8H4V5.9H1.9V8.8H0.2Z" fill="#a9bdcc"/><rect x="2.2" y="0.6" width="1.8" height="2.8" fill="#a9bdcc"/><rect x="6" y="5.1" width="2.7" height="2.1" fill="#a9bdcc"/></svg>
<div class="t" style="left:38.25px;top:378.94px;font-size:9.4px;line-height:9.4px;color:#3d3d3d;font-weight:400;transform:scaleX(0.9205);transform-origin:0 50%;">Call requests</div>
<div class="t" style="left:38.25px;top:391.51px;font-size:7.9px;line-height:7.9px;color:#9a9a9a;font-weight:400;transform:scaleX(0.9364);transform-origin:0 50%;-webkit-text-stroke:0;">Manage customer call requests</div>
<svg style="position:absolute;left:92px;top:378px" width="9" height="9" viewBox="0 0 9 9"><path d="M0.2 3.3H6V8.8H4V5.9H1.9V8.8H0.2Z" fill="#a9bdcc"/><rect x="2.2" y="0.6" width="1.8" height="2.8" fill="#a9bdcc"/><rect x="6" y="5.1" width="2.7" height="2.1" fill="#a9bdcc"/></svg>
<div style="left:24px;top:28px;width:199px;height:89.5px;border:5px solid #fb2b2b;border-top-width:4.5px;"></div>
<div style="left:28px;top:32px;width:199px;height:88.5px;border:1px dotted rgba(255,255,255,0.38);"></div>
</body></html>
